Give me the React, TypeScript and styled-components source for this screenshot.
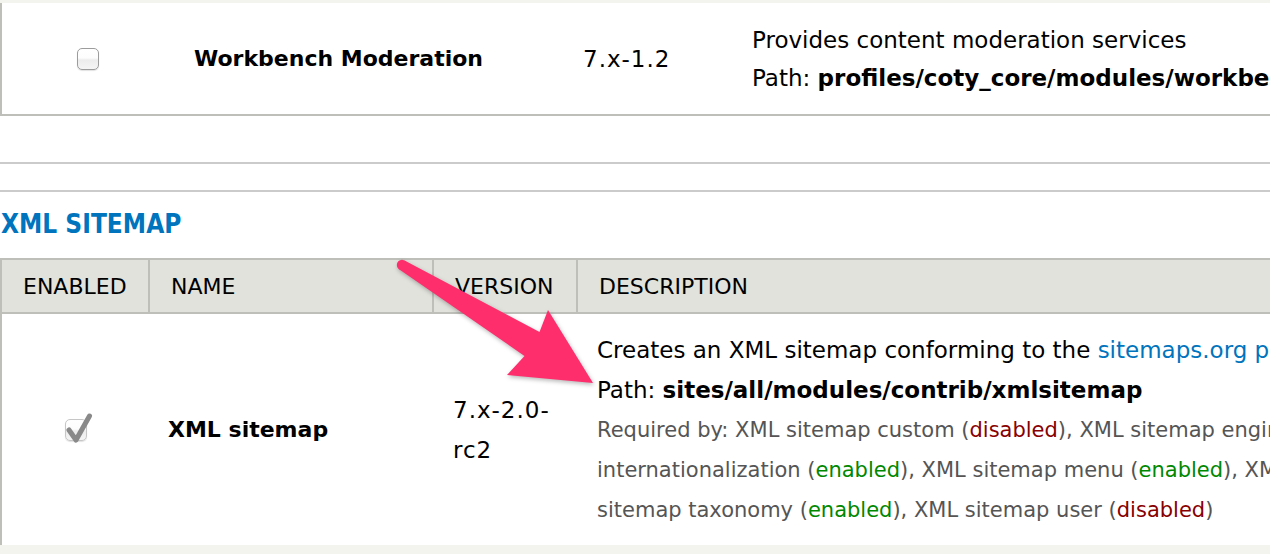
import React from "react";
import styled, { createGlobalStyle } from "styled-components";

// Drupal "Seven" style module list, two tables with an annotation arrow on top

const GlobalStyle = createGlobalStyle`
  html, body {
    margin: 0;
    padding: 0;
    background: #fff;
    overflow: hidden;
  }
  body {
    font-family: "DejaVu Sans", "Lucida Grande", sans-serif;
    color: #000;
  }
`;

const Page = styled.div`
  position: relative;
  width: 1270px;
  height: 554px;
  overflow: hidden;
`;

// stripe of the row above / below (odd rows are tinted)
const RowStripe = styled.div<{ $height: number }>`
  height: ${(p) => p.$height}px;
  background: #f3f4ee;
`;

const Table = styled.div<{ $bottom?: boolean }>`
  width: 1700px;
  border-left: 2px solid #bebfb9;
  border-bottom: ${(p) => (p.$bottom ? "2px solid #bebfb9" : "none")};
`;

const Row = styled.div<{ $cols: string; $height: number }>`
  display: grid;
  grid-template-columns: ${(p) => p.$cols};
  height: ${(p) => p.$height}px;
  background: #fff;
`;

const HeaderRow = styled(Row)`
  background: #e1e2dc;
  border-top: 2px solid #bebfb9;
  border-bottom: 2px solid #bebfb9;
`;

const HeaderCell = styled.div`
  display: flex;
  align-items: center;
  padding-left: 21px;
  border-right: 2px solid #bebfb9;
  font-size: 22px;
  text-transform: uppercase;
  white-space: nowrap;
`;

const Cell = styled.div<{ $pad?: number; $center?: boolean }>`
  display: flex;
  flex-direction: column;
  justify-content: center;
  align-items: ${(p) => (p.$center ? "center" : "flex-start")};
  padding-left: ${(p) => (p.$center ? 0 : p.$pad ?? 20)}px;
  min-width: 0;
`;

const ModuleName = styled.strong`
  font-size: 22px;
  font-weight: bold;
  white-space: nowrap;
`;

const Version = styled.div`
  font-size: 23px;
  line-height: 40px;
  letter-spacing: 1px;
`;

const DescLine = styled.div<{ $lh?: number }>`
  font-size: 23px;
  line-height: ${(p) => p.$lh ?? 40}px;
  white-space: nowrap;

  b {
    font-weight: bold;
  }
`;

const Link = styled.a`
  color: #0074bd;
  text-decoration: none;
`;

const Requirements = styled.div`
  font-size: 21px;
  line-height: 40px;
  color: #555;
  white-space: nowrap;
`;

const Status = styled.span<{ $on: boolean }>`
  color: ${(p) => (p.$on ? "#080" : "#800")};
`;

const FieldsetGap = styled.div`
  margin-top: 46px;
  height: 26px;
  border-top: 2px solid #cbcbcb;
  border-bottom: 2px solid #cbcbcb;
`;

const SectionTitle = styled.h2`
  margin: 16px 0 18px;
  padding-left: 1px;
  font-family: "DejaVu Sans Condensed", "DejaVu Sans", sans-serif;
  font-size: 26px;
  line-height: 32px;
  font-weight: bold;
  color: #0074bd;
`;

const Box = styled.span<{ $checked?: boolean }>`
  position: relative;
  display: inline-block;
  width: 22px;
  height: 22px;
  box-sizing: border-box;
  border-radius: 5px;
  border: 1px solid ${(p) => (p.$checked ? "#c6c6c6" : "#9c9c9c")};
  background: linear-gradient(#ffffff 0%, #fdfdfd 45%, #ececec 55%, #f5f5f5 100%);
  box-shadow: 0 1px 1px rgba(0, 0, 0, 0.12);
`;

const Tick = styled.svg`
  position: absolute;
  left: -1px;
  top: -4px;
  overflow: visible;
`;

const Checkbox = ({ checked }: { checked?: boolean }) => (
  <Box $checked={checked}>
    {checked && (
      <Tick width="26" height="26" viewBox="0 0 26 26">
        <path
          d="M4 14 L11 24 L24.5 0"
          fill="none"
          stroke="#898989"
          strokeWidth="5"
          strokeLinejoin="round"
          strokeLinecap="round"
        />
      </Tick>
    )}
  </Box>
);

const ArrowLayer = styled.svg`
  position: absolute;
  left: 0;
  top: 0;
  pointer-events: none;
  filter: drop-shadow(1px 2px 2px rgba(0, 0, 0, 0.28));
`;

const Arrow = () => (
  <ArrowLayer width="1270" height="554" viewBox="0 0 1270 554">
    <g fill="#fe2e6d">
      <circle cx="402" cy="265" r="5.2" />
      <polygon points="404.6,260.5 539.5,332 548,310 593,383 507,375 524.5,356 399.4,269.5" />
    </g>
  </ArrowLayer>
);

const requiredBy: [string, boolean | null][][] = [
  [
    ["Required by: XML sitemap custom (", null],
    ["disabled", false],
    ["), XML sitemap engines (", null],
    ["disabled", false],
    ["), XML sitemap", null],
  ],
  [
    ["internationalization (", null],
    ["enabled", true],
    ["), XML sitemap menu (", null],
    ["enabled", true],
    ["), XML sitemap node (", null],
    ["enabled", true],
    ["), XML", null],
  ],
  [
    ["sitemap taxonomy (", null],
    ["enabled", true],
    ["), XML sitemap user (", null],
    ["disabled", false],
    [")", null],
  ],
];

const TOP_COLS = "172px 389px 169px 1fr";
const MAIN_COLS = "148px 284px 144px 1fr";

export default function App() {
  return (
    <Page>
      <GlobalStyle />
      <RowStripe $height={3} />
      <Table $bottom>
        <Row $cols={TOP_COLS} $height={111}>
          <Cell $center>
            <Checkbox />
          </Cell>
          <Cell>
            <ModuleName>Workbench Moderation</ModuleName>
          </Cell>
          <Cell>
            <Version>7.x-1.2</Version>
          </Cell>
          <Cell>
            <DescLine $lh={38}>Provides content moderation services</DescLine>
            <DescLine $lh={38}>
              Path: <b>profiles/coty_core/modules/workbench_moderation</b>
            </DescLine>
          </Cell>
        </Row>
      </Table>

      <FieldsetGap />
      <SectionTitle>XML SITEMAP</SectionTitle>

      <Table>
        <HeaderRow $cols={MAIN_COLS} $height={52}>
          <HeaderCell>Enabled</HeaderCell>
          <HeaderCell>Name</HeaderCell>
          <HeaderCell>Version</HeaderCell>
          <HeaderCell>Description</HeaderCell>
        </HeaderRow>
        <Row $cols={MAIN_COLS} $height={231}>
          <Cell $center>
            <Checkbox checked />
          </Cell>
          <Cell $pad={18}>
            <ModuleName>XML sitemap</ModuleName>
          </Cell>
          <Cell $pad={19}>
            <Version>
              7.x-2.0-
              <br />
              rc2
            </Version>
          </Cell>
          <Cell $pad={19}>
            <DescLine>
              Creates an XML sitemap conforming to the{" "}
              <Link href="#">sitemaps.org protocol</Link>.
            </DescLine>
            <DescLine>
              Path: <b>sites/all/modules/contrib/xmlsitemap</b>
            </DescLine>
            {requiredBy.map((line, i) => (
              <Requirements key={i}>
                {line.map(([text, on], j) =>
                  on === null ? (
                    <React.Fragment key={j}>{text}</React.Fragment>
                  ) : (
                    <Status key={j} $on={on}>
                      {text}
                    </Status>
                  )
                )}
              </Requirements>
            ))}
          </Cell>
        </Row>
      </Table>
      <RowStripe $height={20} />
      <Arrow />
    </Page>
  );
}
